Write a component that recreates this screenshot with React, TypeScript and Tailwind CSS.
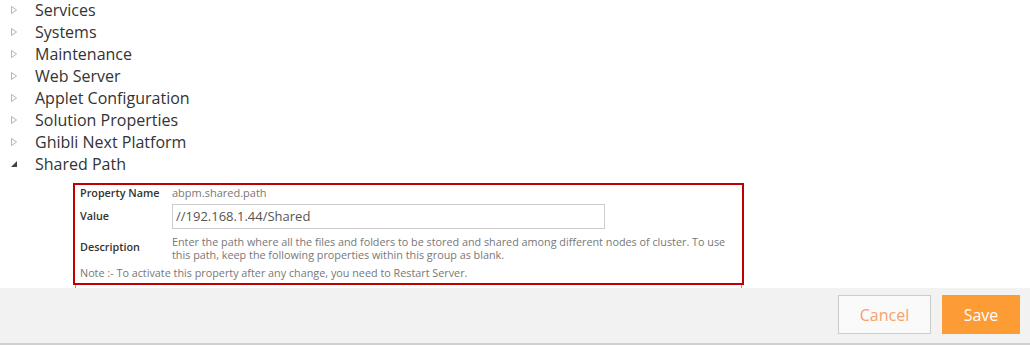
import React from "react";

const items = [
  "Services",
  "Systems",
  "Maintenance",
  "Web Server",
  "Applet Configuration",
  "Solution Properties",
  "Ghibli Next Platform",
];

function Collapsed() {
  return (
    <svg width="6" height="8" viewBox="0 0 6 8" className="shrink-0">
      <path d="M0.5 0.5 L5.5 4 L0.5 7.5 Z" fill="none" stroke="#b5b5b5" strokeWidth="1" />
    </svg>
  );
}

function Expanded() {
  return (
    <svg width="6" height="6" viewBox="0 0 6 6" className="shrink-0">
      <path d="M6 0 L6 6 L0 6 Z" fill="#444" />
    </svg>
  );
}

export default function App() {
  return (
    <div className="w-[1030px] h-[345px] bg-white flex flex-col overflow-hidden font-['Open_Sans',sans-serif] text-[#333]">
      <div className="flex-1 flex flex-col">
        <ul className="flex flex-col -mt-[1px]">
          {items.map((t) => (
            <li key={t} className="flex items-center h-[22px] text-[16px]">
              <span className="w-[35px] pl-[11px] flex items-center">
                <Collapsed />
              </span>
              <span>{t}</span>
            </li>
          ))}
          <li className="flex items-center h-[22px] text-[16px]">
            <span className="w-[35px] pl-[11px] flex items-center">
              <Expanded />
            </span>
            <span>Shared Path</span>
          </li>
        </ul>

        <div className="ml-[73px] mt-[8px] w-[671px] border-2 border-[#c00000] text-[11px]">
          <div className="flex items-center h-[16px]">
            <div className="w-[97px] pl-[5px] font-semibold text-[#333] text-[10.8px]">Property Name</div>
            <div className="text-[#777]">abpm.shared.path</div>
          </div>
          <div className="flex items-center h-[31px]">
            <div className="w-[97px] pl-[5px] font-semibold text-[#333] text-[10.8px]">Value</div>
            <div className="w-[433px] h-[25px] border border-[#ccc] flex items-center px-[3px] text-[13px] text-[#555]">
              //192.168.1.44/Shared
            </div>
          </div>
          <div className="flex items-center h-[31px]">
            <div className="w-[97px] pl-[5px] font-semibold text-[#333] text-[10.8px]">Description</div>
            <div className="text-[#777] text-[10.8px] leading-[13px]">
              Enter the path where all the files and folders to be stored and shared among different nodes of cluster. To use
              <br />
              this path, keep the following properties within this group as blank.
            </div>
          </div>
          <div className="flex items-center h-[20px] pl-[5px] text-[#777] text-[10.8px]">
            Note :- To activate this property after any change, you need to Restart Server.
          </div>
        </div>
        <div className="ml-[75px] w-[667px] flex-1 border-x border-[#999]" />
      </div>

      <div className="h-[57px] bg-[#f2f2f2] border-b-2 border-[#d0d0d0] flex items-center justify-end gap-[11px] pr-[10px] pb-[2px]">
        <button className="w-[93px] h-[39px] bg-[#fafafa] border border-[#ccc] text-[#f7a26a] text-[16px]">
          Cancel
        </button>
        <button className="w-[78px] h-[39px] bg-[#fd9b35] text-white text-[16px]">Save</button>
      </div>
    </div>
  );
}
